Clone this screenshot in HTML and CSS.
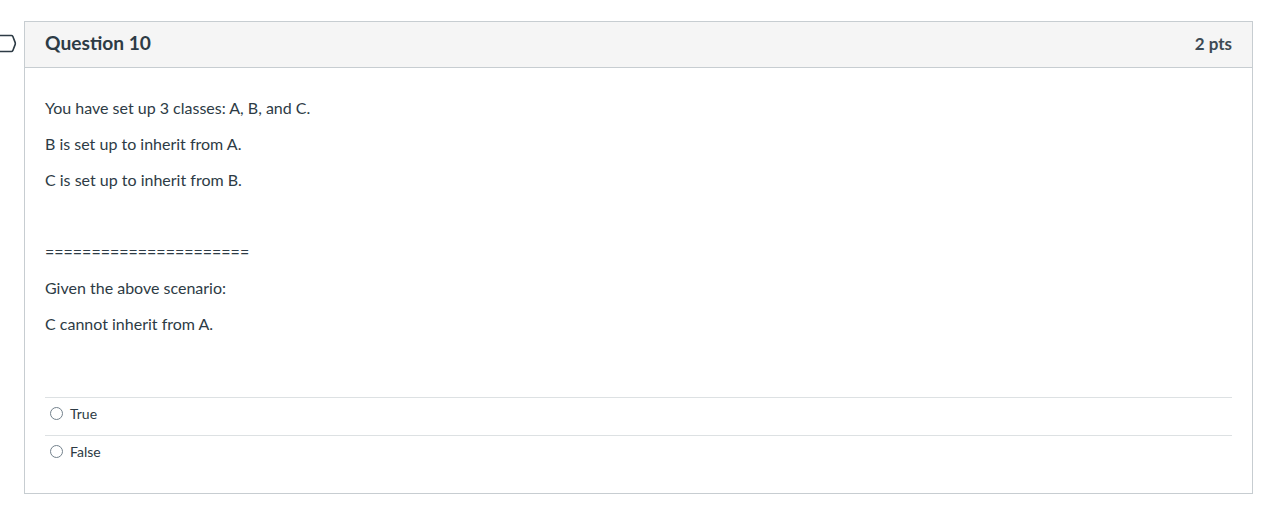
FILE: index.html
```html
<!DOCTYPE html>
<html>
<head>
<meta charset="utf-8">
<link rel="stylesheet" href="styles.css">
</head>
<body>
<div class="page">
  <div class="question">
    <svg class="flag" width="26" height="19" viewBox="0 0 26 19">
      <path d="M-4 1.5 H11.5 Q12.3 1.5 12.8 2.3 L15.2 8.6 Q15.4 9.5 15.2 10.4 L12.8 16.7 Q12.3 17.5 11.5 17.5 H-4" fill="none" stroke="#2d3b45" stroke-width="1.6"/>
    </svg>
    <div class="header">
      <h2 class="title">Question 10</h2>
      <span class="pts">2 pts</span>
    </div>
    <div class="content">
      <div class="text">
        <p>You have set up 3 classes: A, B, and C.</p>
        <p>B is set up to inherit from A.</p>
        <p>C is set up to inherit from B.</p>
        <p>&nbsp;</p>
        <p>======================</p>
        <p>Given the above scenario:</p>
        <p>C cannot inherit from A.</p>
      </div>
      <div class="answers">
        <label class="answer"><span class="radio"></span><span>True</span></label>
        <label class="answer"><span class="radio"></span><span>False</span></label>
      </div>
    </div>
  </div>
</div>
</body>
</html>
```

FILE: styles.css
```css
html, body {
  margin: 0;
  padding: 0;
  background: #fff;
}
body {
  font-family: Lato, "Noto Sans", sans-serif;
  color: #2d3b45;
}
.page {
  padding: 21px 10px 0 24px;
}
.question {
  position: relative;
  width: 1227px;
  border: 1px solid #c7cdd1;
}
.flag {
  position: absolute;
  left: -25px;
  top: 12px;
}
.header {
  display: flex;
  align-items: center;
  justify-content: space-between;
  height: 45px;
  padding: 0 20px;
  background: #f5f5f5;
  border-bottom: 1px solid #c7cdd1;
}
.title {
  margin: 0 0 4px;
  font-size: 19.2px;
  font-weight: 700;
  line-height: 24px;
  color: #2d3b45;
}
.pts {
  font-size: 17px;
  font-weight: 700;
  line-height: 24px;
  color: #3d4a54;
  margin-bottom: 1px;
}
.content {
  padding: 16px 20px 20px;
}
.text p {
  margin: 12px 0;
  font-size: 16px;
  line-height: 24px;
}
.answers {
  margin-top: 61px;
}
.answer {
  display: flex;
  align-items: center;
  gap: 7px;
  border-top: 1px solid #dde1e3;
  padding: 5px 0 11px 5px;
  font-size: 14px;
  line-height: 21px;
  color: #2d3b45;
}
.radio {
  display: inline-block;
  width: 11px;
  height: 11px;
  border: 1px solid #73818c;
  border-radius: 50%;
  background: #fff;
}
```
